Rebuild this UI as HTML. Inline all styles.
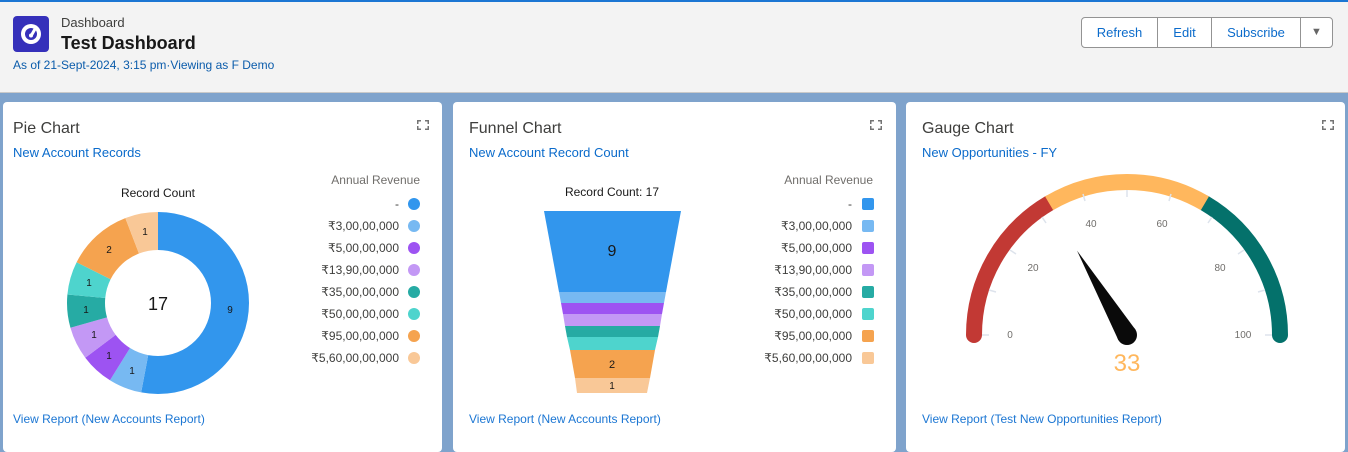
<!DOCTYPE html>
<html><head><meta charset="utf-8"><style>
*{margin:0;padding:0;box-sizing:border-box}
body{width:1348px;height:445px;overflow:hidden;font-family:"Liberation Sans",Arial,sans-serif;background:#7fa3cc;position:relative}
.hdr{position:absolute;left:0;top:0;width:1348px;height:93px;background:#f3f3f3;border-top:2px solid #1b76d3;border-bottom:1px solid #c9c9c9}
.abs{position:absolute;white-space:nowrap}
.card{position:absolute;top:102px;height:350px;background:#fff;border-radius:4px}
.t{font-size:16px;color:#3e3e3c}
.lk{color:#0b6bcb;font-size:13px}
.btns{position:absolute;left:1081px;top:15px;height:31px;display:flex;border:1px solid #939393;border-radius:4px;background:#fff}
.btns div{font-size:13px;color:#0b6bcb;line-height:29px;border-right:1px solid #939393;text-align:center}
svg text{font-family:"Liberation Sans",Arial,sans-serif}
</style></head><body>
<div class="hdr">
<div class="abs" style="left:13px;top:14px;width:36px;height:36px;background:#3530ba;border-radius:4px">
<svg width="36" height="36"><circle cx="18" cy="18" r="10" fill="#fff"/><circle cx="18" cy="18" r="6" fill="#3530ba"/><path d="M18 20 L22 13" stroke="#fff" stroke-width="3"/><circle cx="18" cy="19.5" r="2" fill="#fff"/></svg></div>
<div class="abs" style="left:61px;top:13px;font-size:13px;color:#3e3e3c">Dashboard</div>
<div class="abs" style="left:61px;top:31px;font-size:18px;font-weight:bold;color:#181818">Test Dashboard</div>
<div class="abs" style="left:13px;top:56px;font-size:12px;color:#0b5cab">As of 21-Sept-2024, 3:15 pm·Viewing as F Demo</div>
<div class="btns"><div style="width:76px">Refresh</div><div style="width:54px">Edit</div><div style="width:89px">Subscribe</div><div style="width:31px;border:none;color:#666;font-size:11px">▼</div></div>
</div>

<div class="card" style="left:3px;width:439px"></div>
<div class="card" style="left:453px;width:443px"></div>
<div class="card" style="left:906px;width:439px"></div>

<div class="abs t" style="left:13px;top:120px">Pie Chart</div>
<div class="abs lk" style="left:13px;top:145px">New Account Records</div>
<div class="abs t" style="left:469px;top:120px">Funnel Chart</div>
<div class="abs lk" style="left:469px;top:145px">New Account Record Count</div>
<div class="abs t" style="left:922px;top:120px">Gauge Chart</div>
<div class="abs lk" style="left:922px;top:145px">New Opportunities - FY</div>
<div class="abs lk" style="left:13px;top:412px;color:#1b76d3;font-size:12px">View Report (New Accounts Report)</div>
<div class="abs lk" style="left:469px;top:412px;color:#1b76d3;font-size:12px">View Report (New Accounts Report)</div>
<div class="abs lk" style="left:922px;top:412px;color:#1b76d3;font-size:12px">View Report (Test New Opportunities Report)</div>

<svg class="abs" style="left:0;top:0" width="1348" height="445">
<g fill="#747474"><path d="M417 120h4v1.5h-2.5v2.5h-1.5zM429 120h-4v1.5h2.5v2.5h1.5zM417 130h4v-1.5h-2.5v-2.5h-1.5zM429 130h-4v-1.5h2.5v-2.5h1.5z"/>
<path transform="translate(453 0)" d="M417 120h4v1.5h-2.5v2.5h-1.5zM429 120h-4v1.5h2.5v2.5h1.5zM417 130h4v-1.5h-2.5v-2.5h-1.5zM429 130h-4v-1.5h2.5v-2.5h1.5z"/>
<path transform="translate(905 0)" d="M417 120h4v1.5h-2.5v2.5h-1.5zM429 120h-4v1.5h2.5v2.5h1.5zM417 130h4v-1.5h-2.5v-2.5h-1.5zM429 130h-4v-1.5h2.5v-2.5h1.5z"/></g>
<text x="158" y="197" font-size="12" fill="#181818" text-anchor="middle">Record Count</text>
<g transform="rotate(-90 158 303)" fill="none" stroke-width="38">
<circle cx="158" cy="303" r="72" stroke="#3296ed" stroke-dasharray="239.5 1000"/>
<circle cx="158" cy="303" r="72" stroke="#77b9f2" stroke-dasharray="26.61 1000" stroke-dashoffset="-239.5"/>
<circle cx="158" cy="303" r="72" stroke="#9d53f2" stroke-dasharray="26.61 1000" stroke-dashoffset="-266.11"/>
<circle cx="158" cy="303" r="72" stroke="#c398f5" stroke-dasharray="26.61 1000" stroke-dashoffset="-292.72"/>
<circle cx="158" cy="303" r="72" stroke="#26aba4" stroke-dasharray="26.61 1000" stroke-dashoffset="-319.33"/>
<circle cx="158" cy="303" r="72" stroke="#4ed4cd" stroke-dasharray="26.61 1000" stroke-dashoffset="-345.94"/>
<circle cx="158" cy="303" r="72" stroke="#f5a34f" stroke-dasharray="53.22 1000" stroke-dashoffset="-372.55"/>
<circle cx="158" cy="303" r="72" stroke="#f9c897" stroke-dasharray="26.61 1000" stroke-dashoffset="-425.77"/>
</g>
<g font-size="10" fill="#181818" text-anchor="middle">
<text x="230" y="313">9</text><text x="132" y="374">1</text><text x="109" y="359">1</text><text x="94" y="338">1</text><text x="86" y="313">1</text><text x="89" y="286">1</text><text x="109" y="253">2</text><text x="145" y="235">1</text></g>
<text x="158" y="310" font-size="18" fill="#181818" text-anchor="middle">17</text>

<text x="612" y="196" font-size="12" fill="#181818" text-anchor="middle">Record Count: 17</text>
<g>
<polygon points="544,211 681,211 666,292 559,292" fill="#3296ed"/>
<polygon points="559,292 666,292 664,303 561,303" fill="#77b9f2"/>
<polygon points="561,303 664,303 662,314 563,314" fill="#9d53f2"/>
<polygon points="563,314 662,314 660,326 565,326" fill="#c398f5"/>
<polygon points="565,326 660,326 658,337 567,337" fill="#26aba4"/>
<polygon points="567,337 658,337 655,350 570,350" fill="#4ed4cd"/>
<polygon points="570,350 655,350 650,378 575,378" fill="#f5a34f"/>
<polygon points="575,378 650,378 647,393 577,393" fill="#f9c897"/>
</g>
<text x="612" y="256" font-size="16" fill="#181818" text-anchor="middle">9</text>
<text x="612" y="368" font-size="11" fill="#181818" text-anchor="middle">2</text>
<text x="612" y="389" font-size="10" fill="#181818" text-anchor="middle">1</text>

<g font-size="12" fill="#706e6b" text-anchor="end"><text x="420" y="184">Annual Revenue</text><text x="873" y="184">Annual Revenue</text></g>
<g font-size="12" fill="#3e3e3c" text-anchor="end">
<text x="399" y="208">-</text><text x="399" y="230">₹3,00,00,000</text><text x="399" y="252">₹5,00,00,000</text><text x="399" y="274">₹13,90,00,000</text><text x="399" y="296">₹35,00,00,000</text><text x="399" y="318">₹50,00,00,000</text><text x="399" y="340">₹95,00,00,000</text><text x="399" y="362">₹5,60,00,00,000</text>
<text x="852" y="208">-</text><text x="852" y="230">₹3,00,00,000</text><text x="852" y="252">₹5,00,00,000</text><text x="852" y="274">₹13,90,00,000</text><text x="852" y="296">₹35,00,00,000</text><text x="852" y="318">₹50,00,00,000</text><text x="852" y="340">₹95,00,00,000</text><text x="852" y="362">₹5,60,00,00,000</text>
</g>
<g><circle cx="414" cy="204" r="6" fill="#3296ed"/><circle cx="414" cy="226" r="6" fill="#77b9f2"/><circle cx="414" cy="248" r="6" fill="#9d53f2"/><circle cx="414" cy="270" r="6" fill="#c398f5"/><circle cx="414" cy="292" r="6" fill="#26aba4"/><circle cx="414" cy="314" r="6" fill="#4ed4cd"/><circle cx="414" cy="336" r="6" fill="#f5a34f"/><circle cx="414" cy="358" r="6" fill="#f9c897"/>
<rect x="862" y="198" width="12" height="12" rx="2" fill="#3296ed"/><rect x="862" y="220" width="12" height="12" rx="2" fill="#77b9f2"/><rect x="862" y="242" width="12" height="12" rx="2" fill="#9d53f2"/><rect x="862" y="264" width="12" height="12" rx="2" fill="#c398f5"/><rect x="862" y="286" width="12" height="12" rx="2" fill="#26aba4"/><rect x="862" y="308" width="12" height="12" rx="2" fill="#4ed4cd"/><rect x="862" y="330" width="12" height="12" rx="2" fill="#f5a34f"/><rect x="862" y="352" width="12" height="12" rx="2" fill="#f9c897"/></g>

<g fill="none" stroke-width="16">
<path d="M974 335 A153 153 0 0 1 1049.1 203.3" stroke="#c23934" stroke-linecap="round"/>
<path d="M1204.9 203.3 A153 153 0 0 1 1280 335" stroke="#04716b" stroke-linecap="round"/>
<path d="M1049.1 203.3 A153 153 0 0 1 1204.9 203.3" stroke="#ffb75d"/>
</g>
<g stroke="#dde3ec" stroke-width="1.5">
<line x1="982" y1="335" x2="989" y2="335"/><line x1="1272" y1="335" x2="1265" y2="335"/>
<line x1="989" y1="290" x2="996" y2="292"/><line x1="1265" y1="290" x2="1258" y2="292"/>
<line x1="1010" y1="250" x2="1016" y2="254"/><line x1="1244" y1="250" x2="1238" y2="254"/>
<line x1="1042" y1="217" x2="1046" y2="223"/><line x1="1212" y1="217" x2="1208" y2="223"/>
<line x1="1083" y1="194" x2="1085" y2="201"/><line x1="1171" y1="194" x2="1169" y2="201"/>
<line x1="1127" y1="190" x2="1127" y2="197"/>
</g>
<g font-size="10" fill="#706e6b" text-anchor="middle">
<text x="1010" y="338">0</text><text x="1033" y="271">20</text><text x="1091" y="227">40</text><text x="1162" y="227">60</text><text x="1220" y="271">80</text><text x="1243" y="338">100</text></g>
<polygon points="1077,250.6 1135.6,329.9 1118.4,340.1" fill="#0a0a0a"/>
<circle cx="1127" cy="335" r="10" fill="#0a0a0a"/>
<text x="1127" y="371" font-size="24" fill="#ffb75d" text-anchor="middle">33</text>
</svg>
</body></html>
